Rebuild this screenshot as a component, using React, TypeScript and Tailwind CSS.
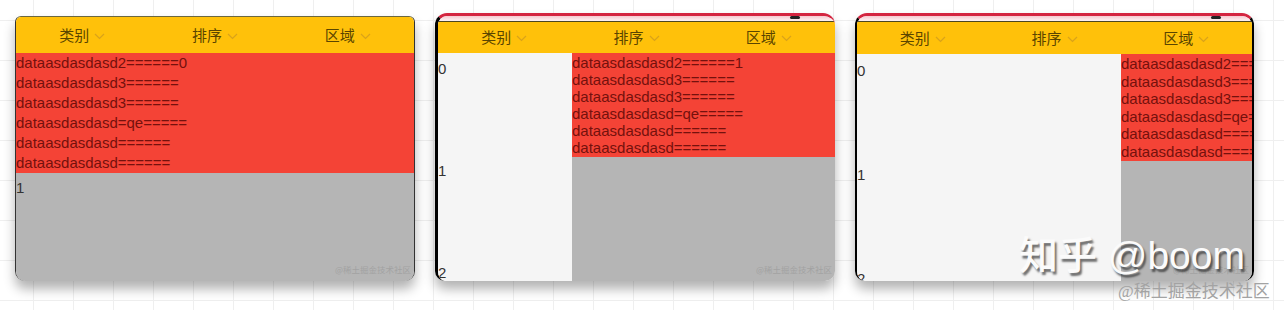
import React from "react";

const rows = [
  "dataasdasdasd2======",
  "dataasdasdasd3======",
  "dataasdasdasd3======",
  "dataasdasdasd=qe=====",
  "dataasdasdasd======",
  "dataasdasdasd======",
];

const latin = { fontFamily: '"Liberation Sans", "Noto Sans CJK SC", sans-serif' };
const cjk = { fontFamily: '"Noto Sans CJK SC", "Liberation Sans", sans-serif' };

function Chevron() {
  return (
    <svg width="11" height="7" viewBox="0 0 11 7" className="ml-[5px] mt-[2px]">
      <path d="M1 1l4.5 4.5L10 1" fill="none" stroke="#d9a31a" strokeWidth="1.2" />
    </svg>
  );
}

function Header({ h }: { h: string }) {
  return (
    <div className={`grid grid-cols-3 bg-[#ffc10a] ${h}`} style={cjk}>
      {["类别", "排序", "区域"].map((t) => (
        <div key={t} className="flex items-center justify-center text-[15px] text-[#5a4500]">
          {t}
          <Chevron />
        </div>
      ))}
    </div>
  );
}

function RedRows({ tag, lh }: { tag: string; lh: string }) {
  return (
    <div className={`bg-[#f44336] text-[15px] text-[#74110d] whitespace-nowrap ${lh}`} style={latin}>
      {rows.map((r, i) => (
        <div key={i}>{i === 0 ? r + tag : r}</div>
      ))}
    </div>
  );
}

function Mark() {
  return (
    <div
      className="absolute right-[3px] bottom-[5px] text-[8.5px] text-[#9a9a9a] opacity-70"
      style={cjk}
    >
      @稀土掘金技术社区
    </div>
  );
}

function Numbers({ h }: { h: string }) {
  return (
    <div className="text-[15px] text-[#333] leading-[17px]" style={latin}>
      {["0", "1", "2"].map((n) => (
        <div key={n} className={h}>
          {n}
        </div>
      ))}
    </div>
  );
}

export default function App() {
  return (
    <div className="relative w-[1284px] h-[310px] overflow-hidden bg-white bg-[linear-gradient(to_right,#efefef_1px,transparent_1px),linear-gradient(to_bottom,#efefef_1px,transparent_1px)] bg-[size:40px_40px] bg-[position:33px_20px]">
      <div className="flex items-start pl-[15px] gap-[20px]">
        {/* panel 1 */}
        <div className="relative w-[400px] mt-[16px] overflow-hidden rounded-t-[6px] rounded-b-[10px] border-x border-t border-x-[#333] border-t-[#6b6840] shadow-[0_8px_12px_rgba(0,0,0,0.3)]">
          <Header h="h-[36px]" />
          <div className="h-[228px] bg-[#b5b5b5]">
            <div className="h-[120px] bg-[#f44336]">
              <RedRows tag="0" lh="leading-[20px]" />
            </div>
            <div className="pt-[5px] text-[15px] leading-[20px] text-[#333]" style={latin}>
              1
            </div>
          </div>
          <Mark />
        </div>

        {/* panel 2 */}
        <div className="relative w-[400px] mt-[13px] overflow-hidden rounded-t-[12px] rounded-b-[10px] border-t-[3px] border-l-[3px] border-t-[#d42540] border-l-black shadow-[0_8px_12px_rgba(0,0,0,0.3)]">
          <div className="relative h-[5px] bg-[linear-gradient(to_bottom,#f6c9d0,#fdf3f4)]">
            <div className="absolute left-[352px] top-0 w-[10px] h-[3px] rounded-full bg-[#222]" />
          </div>
          <div className="border-t border-[#4c4620]">
            <Header h="h-[31px]" />
          </div>
          <div className="flex h-[228px]">
            <div className="w-[134px] bg-[#f5f5f5] overflow-hidden">
              <Numbers h="h-[102px] pt-[7px]" />
            </div>
            <div className="flex-1 bg-[#b5b5b5] overflow-hidden">
              <div className="h-[104px] bg-[#f44336] pt-[1px]">
                <RedRows tag="1" lh="leading-[17px]" />
              </div>
            </div>
          </div>
          <Mark />
        </div>

        {/* panel 3 */}
        <div className="relative w-[399px] mt-[13px] overflow-hidden rounded-t-[12px] rounded-b-[10px] border-t-[3px] border-x-2 border-t-[#d42540] border-x-black shadow-[0_8px_12px_rgba(0,0,0,0.3)]">
          <div className="relative h-[5px] bg-[linear-gradient(to_bottom,#f6c9d0,#fdf3f4)]">
            <div className="absolute left-[354px] top-0 w-[10px] h-[3px] rounded-full bg-[#222]" />
          </div>
          <div className="border-t border-[#4c4620]">
            <Header h="h-[32px]" />
          </div>
          <div className="flex h-[227px]">
            <div className="w-[264px] bg-[#f5f5f5] overflow-hidden">
              <Numbers h="h-[104px] pt-[8px]" />
            </div>
            <div className="flex-1 bg-[#b5b5b5] overflow-hidden">
              <div className="h-[106px] bg-[#f44336] pt-[1px]">
                <RedRows tag="2" lh="leading-[17.6px]" />
              </div>
            </div>
          </div>
          <Mark />
        </div>
      </div>

      {/* overlay watermarks */}
      <div
        className="absolute left-[1019px] top-[232px] text-[39px] leading-[48px] font-medium text-[#fbfbfb] whitespace-nowrap [text-shadow:2px_3px_2px_rgba(0,0,0,0.55)]"
        style={{ fontFamily: '"Liberation Sans", "Noto Sans CJK SC", sans-serif' }}
      >
        知乎 @boom
      </div>
      <div
        className="absolute left-[1118px] top-[280px] text-[17px] leading-[24px] text-[#a3a3a3] whitespace-nowrap"
        style={{ fontFamily: '"Liberation Serif", "Noto Sans CJK SC", serif' }}
      >
        @稀土掘金技术社区
      </div>
    </div>
  );
}
